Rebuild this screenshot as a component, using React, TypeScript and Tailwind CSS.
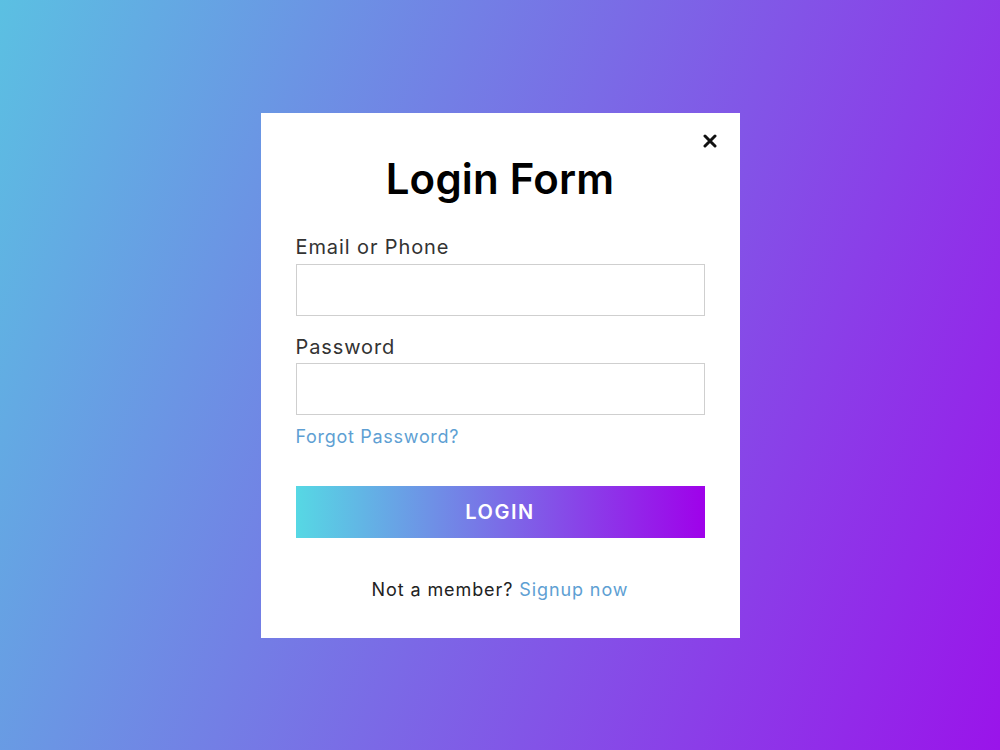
export default function App() {
  return (
    <div className="w-full h-[750px] flex items-center justify-center bg-[linear-gradient(110deg,#5bc0e2,#9a14ea)] font-['Inter',sans-serif]">
      <div className="relative w-[479px] h-[525px] bg-white px-[35px] pt-[44px]">
        {/* close */}
        <button className="absolute top-[21px] right-[23px] w-[14px] h-[14px]">
          <svg viewBox="0 0 14 14" width="14" height="14">
            <path d="M2 2L12 12M12 2L2 12" stroke="#111" strokeWidth="3" strokeLinecap="round" />
          </svg>
        </button>

        <h1 className="text-center text-[42px] leading-[44px] font-semibold text-black tracking-[0.2px]">Login Form</h1>

        <form className="mt-[34px]">
          <label className="block text-[20px] leading-[24px] text-[#333] tracking-[0.9px]">Email or Phone</label>
          <input type="text" className="mt-[5px] block w-full h-[52px] border border-[#cfcfcf] outline-none" />

          <label className="block mt-[19px] text-[20px] leading-[24px] text-[#333] tracking-[0.9px]">Password</label>
          <input type="password" className="mt-[4px] block w-full h-[52px] border border-[#cfcfcf] outline-none" />

          <a href="#" className="block mt-[11px] text-[18px] leading-[22px] text-[#5e9fd3] tracking-[0.7px]">Forgot Password?</a>

          <button type="button" className="mt-[38px] block w-full h-[52px] bg-[linear-gradient(90deg,#56d8e4,#9f01ea)] text-white text-[20px] font-semibold tracking-[1.5px]">
            LOGIN
          </button>

          <p className="mt-[41px] text-center text-[18px] leading-[22px] text-[#222] tracking-[0.9px]">
            Not a member? <a href="#" className="text-[#5e9fd3]">Signup now</a>
          </p>
        </form>
      </div>
    </div>
  )
}
